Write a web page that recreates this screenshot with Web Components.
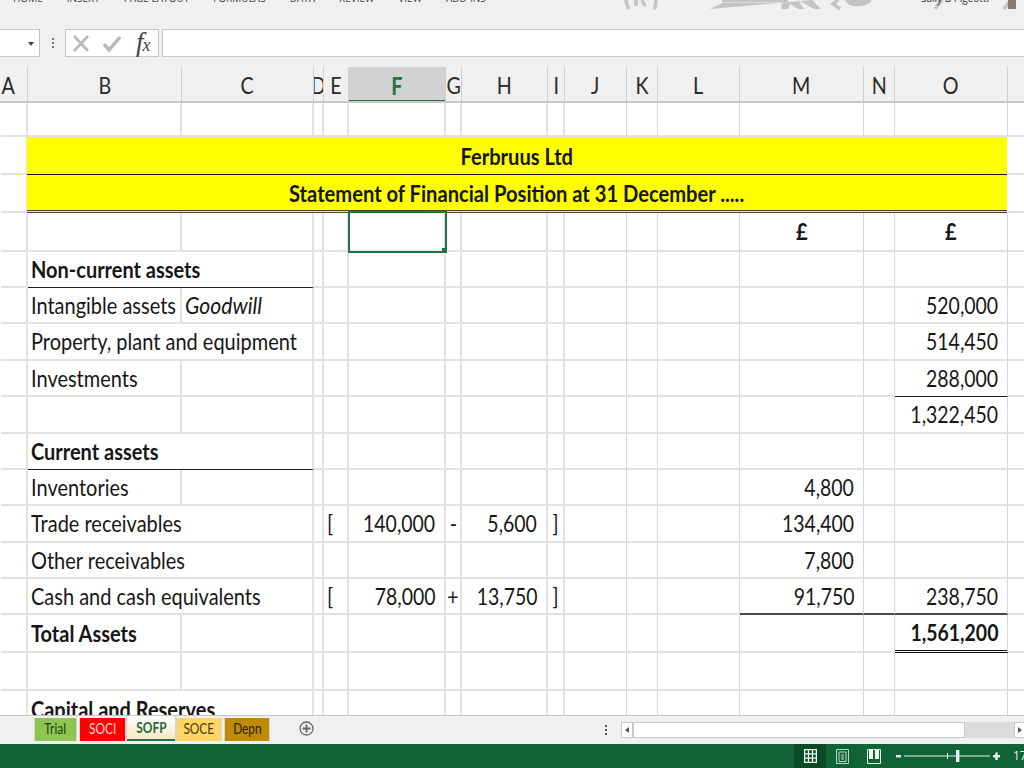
<!DOCTYPE html>
<html>
<head>
<meta charset="utf-8">
<title>Ferbruus Ltd</title>
<style>
  html, body { margin: 0; height: 100%; overflow: hidden; }
  body { display: flex; flex-direction: column; width: 1024px; height: 768px; font-family: "Lato", "Liberation Sans", sans-serif; }
</style>
</head>
<body>
<xl-ribbon></xl-ribbon>
<xl-formula-bar></xl-formula-bar>
<xl-col-headers></xl-col-headers>
<xl-sheet></xl-sheet>
<xl-tabs></xl-tabs>
<xl-status></xl-status>
<script>
  const COLS = [
    ['A', 27], ['B', 154], ['C', 132], ['D', 10], ['E', 25], ['F', 97], ['G', 16], ['H', 86],
    ['I', 17], ['J', 62], ['K', 31], ['L', 82], ['M', 124], ['N', 31], ['O', 113], ['', 17]
  ];
  const GRID = COLS.map(c => c[1] + 'px').join(' ');

  class XlRibbon extends HTMLElement {
    constructor() {
      super();
      this.attachShadow({ mode: 'open' });
      const tabs = ['HOME', 'INSERT', 'PAGE LAYOUT', 'FORMULAS', 'DATA', 'REVIEW', 'VIEW', 'ADD-INS'];
      this.shadowRoot.innerHTML = `
        <style>
          :host { display: flex; height: 28px; flex: none; background: #f0f0f0; overflow: hidden; }
          nav { display: flex; gap: 24px; width: 608px; padding-left: 13px; box-sizing: border-box; margin-top: -9px; height: 14px;
                font: 10px/14px "Open Sans", sans-serif; color: #444; white-space: nowrap; }
          svg { flex: none; display: block; }
          .user { font: 10px/14px "Open Sans", sans-serif; color: #333; margin-top: -9px; margin-left: -95px; width: 81px; height: 14px; white-space: nowrap; }
          .pic { width: 8px; height: 9px; margin-left: 6px; background: #8a7a68; }
        </style>
        <nav>${tabs.map(t => `<span>${t}</span>`).join('')}</nav>
        <svg width="408" height="10" viewBox="608 0 408 10" fill="none" stroke="#c4c4c4" stroke-width="3.5">
          <path d="M626 0c0 4 1 6 3 9M654 9c2-3 2-6 2-9M636 0v6M642 0l3 6"/>
          <path d="M710 9l12-6 60 0-1 6h7l2-5 8 5h6l-6-9 16 9h7l-9-9z" fill="#c4c4c4" stroke="none"/>
          <path d="M722 1h66" stroke-width="3"/>
          <path d="M840 9l-7-5 5-4"/>
          <path d="M846 0c3 7 20 7 25 0" fill="#c4c4c4" stroke-width="2"/>
          <path d="M935 9l7-9M1004 9l7-9"/>
        </svg>
        <span class="user">Sally B Pigeotti</span>
        <span class="pic"></span>`;
    }
  }

  class XlFormulaBar extends HTMLElement {
    constructor() {
      super();
      this.attachShadow({ mode: 'open' });
      this.shadowRoot.innerHTML = `
        <style>
          :host { display: flex; height: 29px; flex: none; background: #f0f0f0; box-sizing: border-box; padding-top: 1px; }
          .box { background: #fff; border: 1px solid #c6c6c6; height: 28px; box-sizing: border-box; }
          .name { width: 40px; border-left: 0; display: flex; align-items: center; justify-content: flex-end; padding-right: 5px; box-sizing: border-box; }
          .tri { width: 0; height: 0; border: 3px solid transparent; border-top: 4px solid #444; margin-top: 4px; }
          .dots { width: 25px; display: flex; flex-direction: column; align-items: center; justify-content: center; gap: 2px; }
          .dots i { width: 2px; height: 2px; background: #777; }
          .fx { width: 94px; display: flex; align-items: center; padding-left: 7px; box-sizing: border-box; gap: 14px; }
          .fn { font: italic 400 27px/24px "Liberation Serif", serif; color: #444; margin-left: 1px; letter-spacing: -1px; }
          .fn small { font-size: 18px; }
          .input { flex: 1; margin-left: 3px; border-right: 0; }
        </style>
        <div class="box name"><span class="tri"></span></div>
        <div class="dots"><i></i><i></i><i></i></div>
        <div class="box fx">
          <svg width="16" height="17" viewBox="0 0 16 17" fill="none" stroke="#b8b8b8" stroke-width="2.6"><path d="M1 1l14 15M15 1L1 16"/></svg>
          <svg width="18" height="17" viewBox="0 0 18 17" fill="none" stroke="#b8b8b8" stroke-width="3.4"><path d="M1 9l5 6L17 2"/></svg>
          <span class="fn">f<small>x</small></span>
        </div>
        <div class="box input"></div>`;
    }
  }

  class XlColHeaders extends HTMLElement {
    constructor() {
      super();
      this.attachShadow({ mode: 'open' });
      this.shadowRoot.innerHTML = `
        <style>
          :host { display: grid; grid-template-columns: ${GRID}; height: 46px; flex: none; box-sizing: border-box;
                  background: #f0f0f0; padding: 10px 0 0 1px; border-bottom: 2px solid #c8c8c8; font: 24px/1 "Lato", sans-serif; color: #2a2a2a; overflow: hidden; }
          div { display: flex; align-items: center; justify-content: center; overflow: hidden; box-sizing: border-box;
                border-right: 1px solid #cfcfcf; padding-top: 2px; }
          div span { display: inline-block; transform: scaleX(.82); }
          .sel { background: #d2d2d2; color: #217346; font-weight: 700; box-shadow: inset 0 -2px #217346; margin-bottom: -1px; }
          .first { padding-right: 11px; }
        </style>
        ${COLS.map(c => `<div class="${c[0] === 'F' ? 'sel' : c[0] === 'A' ? 'first' : ''}"><span>${c[0]}</span></div>`).join('')}`;
    }
  }

  // [first col, span, text, classes]
  const ROWS = [
    [34, []],
    [38, [[1, 14, 'Ferbruus Ltd', 'bold center yellow lineb']]],
    [38, [[1, 14, 'Statement of Financial Position at 31 December .....', 'bold center yellow dbl-y']]],
    [39, [[5, 1, '', 'sel'], [12, 1, '£', 'bold center'], [14, 1, '£', 'bold center']]],
    [36, [[1, 2, 'Non-current assets', 'bold lineb']]],
    [36, [[1, 1, 'Intangible assets', ''], [2, 1, 'Goodwill', 'ital'], [14, 1, '520,000', 'num']]],
    [37, [[1, 2, 'Property, plant and equipment', ''], [14, 1, '514,450', 'num']]],
    [36, [[1, 1, 'Investments', ''], [14, 1, '288,000', 'num lineb']]],
    [37, [[14, 1, '1,322,450', 'num']]],
    [36, [[1, 2, 'Current assets', 'bold lineb']]],
    [36, [[1, 1, 'Inventories', ''], [12, 1, '4,800', 'num']]],
    [37, [[1, 2, 'Trade receivables', ''], [4, 1, '[', 'brk'], [5, 1, '140,000', 'num'], [6, 1, '-', 'center'], [7, 1, '5,600', 'num'], [8, 1, ']', 'center'], [12, 1, '134,400', 'num']]],
    [36, [[1, 2, 'Other receivables', ''], [12, 1, '7,800', 'num']]],
    [36, [[1, 2, 'Cash and cash equivalents', ''], [4, 1, '[', 'brk'], [5, 1, '78,000', 'num'], [6, 1, '+', 'center'], [7, 1, '13,750', 'num'], [8, 1, ']', 'center'], [12, 1, '91,750', 'num line2'], [13, 1, '', 'line2'], [14, 1, '238,750', 'num line2']]],
    [38, [[1, 1, 'Total Assets', 'bold'], [14, 1, '1,561,200', 'num bold dbl']]],
    [38, []],
    [38, [[1, 2, 'Capital and Reserves', 'bold']]]
  ];

  class XlSheet extends HTMLElement {
    constructor() {
      super();
      this.attachShadow({ mode: 'open' });
      let cells = '';
      ROWS.forEach((row, r) => {
        const taken = {};
        row[1].forEach(c => { taken[c[0]] = c; for (let i = 1; i < c[1]; i++) taken[c[0] + i] = 'skip'; });
        for (let i = 0; i < COLS.length; i++) {
          const c = taken[i];
          if (c === 'skip') continue;
          const span = c ? c[1] : 1;
          const cls = ((c && c[3]) || '') + (i + span - 1 >= 9 ? ' thin' : '');
          const text = c && c[2] ? `<span>${c[2]}</span>` : '';
          cells += `<div class="cell ${cls}" style="grid-row:${r + 1};grid-column:${i + 1} / span ${span}">${text}</div>`;
        }
      });
      this.shadowRoot.innerHTML = `
        <style>
          :host { display: block; flex: 1; min-height: 0; overflow: hidden; background: #fff; padding-left: 1px;
                  font: 23.5px/1 "Lato", sans-serif; color: #161616; }
          .grid { display: grid; grid-template-columns: ${GRID}; grid-template-rows: ${ROWS.map(r => r[0] + 'px').join(' ')}; }
          .cell { box-sizing: border-box; border-right: 2px solid #e2e2e2; border-bottom: 2px solid #e2e2e2; display: flex;
                  align-items: center; padding: 1px 0 0 3px; white-space: nowrap; position: relative; min-width: 0; }
          .cell span { display: inline-block; transform: scaleX(.85); transform-origin: left center; }
          .thin { border-right: 1px solid #d8d8d8; border-bottom-width: 2px; }
          .bold { font-weight: 700; }
          .cell.bold span { transform: scaleX(.85); }
          .cell.ital span { font-style: italic; transform: scaleX(.9); }
          .num { justify-content: flex-end; padding: 1px 9px 0 0; }
          .cell.num span { transform: scaleX(.827); transform-origin: right center; }
          .center { justify-content: center; padding-left: 0; }
          .cell.center span { transform-origin: center center; }
          .cell.yellow span { transform: scaleX(.857); }
          .brk { padding-left: 3px; }
          .yellow { background: #ffff00; border-right-width: 0; margin: 0 1px 0 -1px; padding-top: 2px; }
          .lineb { border-bottom: 1px solid #1c1c1c; }
          .line2 { border-bottom: 2px solid #4a4a4a; }
          .dbl-y { border-bottom: 3px double #4a4a20; }
          .dbl { border-bottom: 3px double #111; }
          .sel { outline: 2px solid #217346; outline-offset: -1px; margin-top: -1px; z-index: 1; }
          .sel::after { content: ""; position: absolute; right: -3px; bottom: -3px; width: 5px; height: 5px; background: #217346; }
        </style>
        <div class="grid">${cells}</div>`;
    }
  }

  class XlTabs extends HTMLElement {
    constructor() {
      super();
      this.attachShadow({ mode: 'open' });
      const tabs = [
        ['Trial', 41, '#8cc54f', '#243d18', 4],
        ['SOCI', 45, '#ff0000', '#ffd8d8', 2],
        ['SOFP', 48, '', '#1f6b42', 2],
        ['SOCE', 44, '#ffd566', '#4a3a10', 4],
        ['Depn', 44, '#bf8b06', '#2c1f00', 0]
      ];
      this.shadowRoot.innerHTML = `
        <style>
          :host { display: flex; align-items: flex-start; height: 29px; flex: none; box-sizing: border-box; background: #f0f0f0; position: relative;
                  border-top: 1px solid #c6c6c6; padding-left: 35px; font: 14.5px/1 "Lato", sans-serif; }
          .tab { height: 23px; margin-top: 2px; display: flex; align-items: center; justify-content: center;
                 box-shadow: 1px 0 #d4d4d4, -1px 0 #d4d4d4; }
          .tab span { display: inline-block; transform: scaleX(.82); }
          .on { height: 25px; margin-top: 0; padding-top: 1px; font-weight: 700;
                background: linear-gradient(#ffffff, #fbe8bf); border-bottom: 2px solid #217346; box-sizing: border-box; }
          svg { margin: 5px 0 0 30px; }
        </style>
        ${tabs.map(t => `<div class="tab ${t[2] ? '' : 'on'}" style="width:${t[1]}px;margin-right:${t[4]}px;color:${t[3]};${t[2] ? 'background:' + t[2] : ''}"><span>${t[0]}</span></div>`).join('')}
        <svg width="15" height="15" viewBox="0 0 15 15" fill="none" stroke="#666"><circle cx="7.5" cy="7.5" r="6.5" stroke-width="1.3"/><path d="M7.5 3.5v8M3.5 7.5h8" stroke-width="1.8"/></svg>
        <xl-scrollbar></xl-scrollbar>`;
    }
  }

  class XlScrollbar extends HTMLElement {
    constructor() {
      super();
      this.attachShadow({ mode: 'open' });
      this.shadowRoot.innerHTML = `
        <style>
          :host { display: flex; align-items: center; position: absolute; left: 605px; right: -2px; top: 6px; height: 16px; }
          .dots { width: 5px; display: flex; flex-direction: column; gap: 2px; margin-right: 11px; }
          .dots i { width: 2px; height: 2px; background: #555; }
          .btn { width: 12px; height: 16px; box-sizing: border-box; background: #fff; border: 1px solid #c8c8c8; display: flex; align-items: center; justify-content: center; flex: none; }
          .btn i { width: 0; height: 0; border: 3.5px solid transparent; }
          .l i { border-right: 4px solid #555; border-left: 0; }
          .r i { border-left: 4px solid #555; border-right: 0; }
          .thumb { width: 332px; height: 16px; box-sizing: border-box; background: #fff; border: 1px solid #c8c8c8; flex: none; }
          .track { flex: 1; height: 16px; background: #dcdcdc; }
        </style>
        <div class="dots"><i></i><i></i><i></i></div>
        <div class="btn l"><i></i></div>
        <div class="thumb"></div>
        <div class="track"></div>
        <div class="btn r"><i></i></div>`;
    }
  }

  class XlStatus extends HTMLElement {
    constructor() {
      super();
      this.attachShadow({ mode: 'open' });
      this.shadowRoot.innerHTML = `
        <style>
          :host { display: flex; align-items: center; height: 24px; flex: none; background: #0f6335; color: #e8f2ec;
                  font: 12px/1 "Open Sans", sans-serif; overflow: hidden; padding-left: 794px; box-sizing: border-box; white-space: nowrap; }
          .v { width: 32px; height: 24px; display: flex; align-items: center; justify-content: center; flex: none; }
          .on { background: #0a4a27; }
          .zoom { flex: none; display: block; margin-left: 6px; }
          .pct { margin-left: 12px; }
        </style>
        <div class="v on"><svg width="13" height="14" viewBox="0 0 13 14" fill="none" stroke="#eef6f1" stroke-width="1.3"><path d="M.6.6h11.8v12.8H.6zM4.5.6v12.8M8.5.6v12.8M.6 4.8h11.8M.6 9.2h11.8"/></svg></div>
        <div class="v"><svg width="13" height="15" viewBox="0 0 13 15" fill="none" stroke="#bcd6c6"><path d="M.5.5h12v14H.5zM3 3h7v9.5H3zM5 6h3M5 8h3M5 10h3"/></svg></div>
        <div class="v"><svg width="14" height="15" viewBox="0 0 14 15"><path d="M.5.5h13v14H.5z" fill="none" stroke="#e8f2ec"/><path d="M2 1h4v9H2zM8 1h4v9H8z" fill="#f4faf6"/></svg></div>
        <svg class="zoom" width="105" height="14" viewBox="0 0 105 14" fill="#e8f2ec">
          <rect x="0" y="6" width="5" height="2.4"/>
          <rect x="8" y="6.5" width="86" height="1"/>
          <rect x="51" y="4" width="1" height="6"/>
          <rect x="60" y="1" width="3.4" height="12"/>
          <rect x="97" y="6" width="7" height="2.4"/><rect x="99.3" y="3.5" width="2.4" height="7.5"/>
        </svg>
        <span class="pct">175%</span>`;
    }
  }

  customElements.define('xl-ribbon', XlRibbon);
  customElements.define('xl-formula-bar', XlFormulaBar);
  customElements.define('xl-col-headers', XlColHeaders);
  customElements.define('xl-sheet', XlSheet);
  customElements.define('xl-scrollbar', XlScrollbar);
  customElements.define('xl-tabs', XlTabs);
  customElements.define('xl-status', XlStatus);
</script>
</body>
</html>
